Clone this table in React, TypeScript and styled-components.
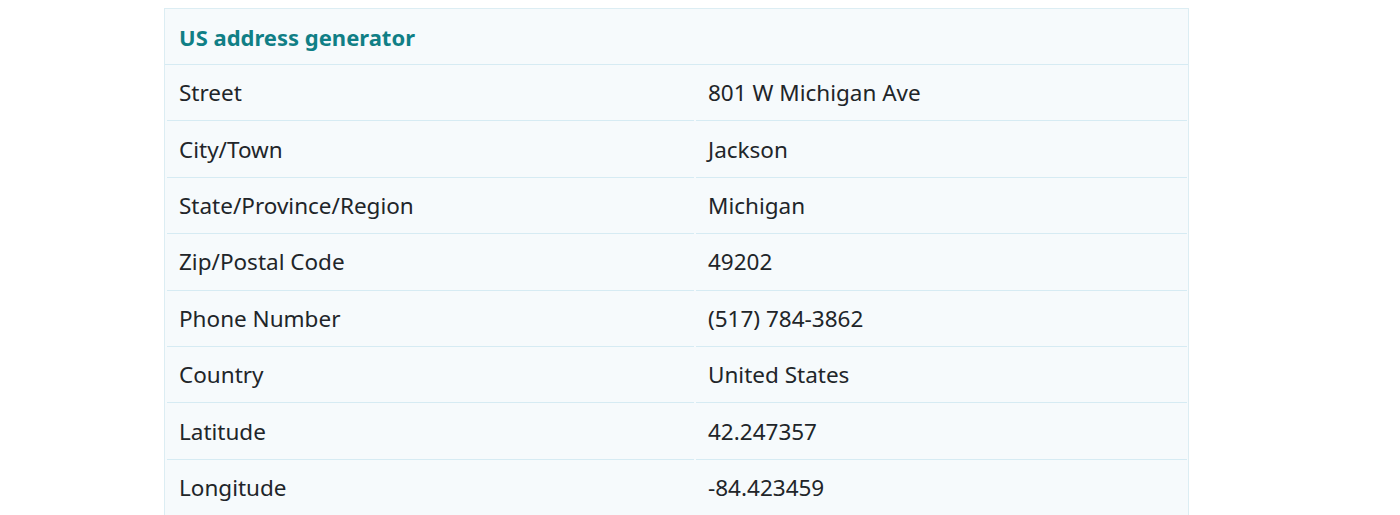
import React, { FC } from "react";
import styled, { createGlobalStyle } from "styled-components";

const GlobalStyle = createGlobalStyle`
  body {
    margin: 8px;
    background: #fff;
    font-family: "Noto Sans", "Open Sans", sans-serif;
    color: #212529;
  }
`;

const Card = styled.div`
  margin-left: 156px;
  width: 1025px;
  box-sizing: border-box;
  border: 1px solid #dcedf3;
  border-bottom: none;
  background: #f6fafc;
`;

const Title = styled.h2`
  margin: 0;
  height: 56px;
  box-sizing: border-box;
  display: flex;
  align-items: center;
  padding: 0 14px;
  font-size: 22px;
  font-weight: 700;
  color: #107f86;
  border-bottom: 1px solid #d6ebf3;
`;

const Table = styled.table`
  width: 100%;
  table-layout: fixed;
  border-collapse: separate;
  border-spacing: 2px 0;
`;

const Col = styled.col<{ w: number }>`
  width: ${({ w }) => w}px;
`;

const Cell = styled.td`
  height: 56.4px;
  box-sizing: border-box;
  padding: 0 12px;
  font-size: 22.5px;
  color: #212529;
  border-bottom: 1px solid #d6ebf3;
  vertical-align: middle;
  white-space: nowrap;
`;

type Row = { label: string; value: string };

const rows: Row[] = [
  { label: "Street", value: "801 W Michigan Ave" },
  { label: "City/Town", value: "Jackson" },
  { label: "State/Province/Region", value: "Michigan" },
  { label: "Zip/Postal Code", value: "49202" },
  { label: "Phone Number", value: "(517) 784-3862" },
  { label: "Country", value: "United States" },
  { label: "Latitude", value: "42.247357" },
  { label: "Longitude", value: "-84.423459" },
];

const App: FC = () => {
  return (
    <>
      <GlobalStyle />
      <Card>
        <Title>US address generator</Title>
        <Table>
          <colgroup>
            <Col w={527} />
            <Col w={491} />
          </colgroup>
          <tbody>
            {rows.map((row) => (
              <tr key={row.label}>
                <Cell>{row.label}</Cell>
                <Cell>{row.value}</Cell>
              </tr>
            ))}
          </tbody>
        </Table>
      </Card>
    </>
  );
};

export default App;
